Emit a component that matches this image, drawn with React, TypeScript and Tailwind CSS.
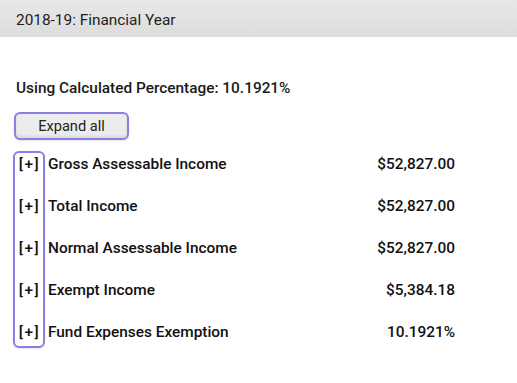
const rows = [
  { label: "Gross Assessable Income", value: "$52,827.00" },
  { label: "Total Income", value: "$52,827.00" },
  { label: "Normal Assessable Income", value: "$52,827.00" },
  { label: "Exempt Income", value: "$5,384.18" },
  { label: "Fund Expenses Exemption", value: "10.1921%" },
];

export default function App() {
  return (
    <div className="min-h-[383px] w-[517px] bg-white font-['Roboto',sans-serif] text-[15.4px] text-[#1a1a1a]">
      <div className="flex h-[37px] items-center bg-gradient-to-b from-[#e8e8e8] to-[#dcdcdc] px-4 pt-[4px] text-[15.4px] text-[#222]">
        2018-19: Financial Year
      </div>

      <div className="px-4 pt-[41px]">
        <p className="font-medium leading-[20px]">Using Calculated Percentage: 10.1921%</p>

        <button className="-ml-[2px] mt-[14px] flex h-[28px] w-[115px] items-center justify-center rounded-[6px] border-2 border-[#8b7ee6] bg-[#ececec] text-[14.6px] leading-none text-[#222] shadow-[inset_0_-2px_3px_rgba(0,0,0,0.08),0_1px_2px_rgba(0,0,0,0.12)]">
          Expand all
        </button>

        <div className="-ml-[3px] mt-[11px] flex">
          <div className="flex w-[32px] flex-col items-center gap-[22px] rounded-[6px] border-2 border-[#8b7ee6] pt-[1px] pb-[4px] pl-[1px] shadow-[0_1px_2px_rgba(0,0,0,0.1)]">
            {rows.map((r) => (
              <span key={r.label} className="font-medium leading-[20px] tracking-[1.5px] text-[#111]">
                [+]
              </span>
            ))}
          </div>
          <div className="ml-[3px] flex w-[407px] flex-col gap-[22px] pt-[3px]">
            {rows.map((r) => (
              <div key={r.label} className="flex justify-between font-medium leading-[20px] text-[#111]">
                <span>{r.label}</span>
                <span>{r.value}</span>
              </div>
            ))}
          </div>
        </div>
      </div>
    </div>
  );
}
